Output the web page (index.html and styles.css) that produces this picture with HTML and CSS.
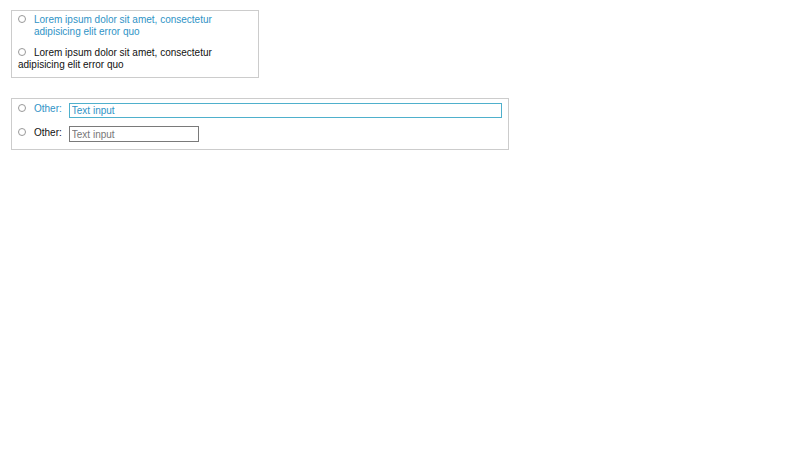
FILE: index.html
```html
<!DOCTYPE html>
<html>
<head>
<meta charset="utf-8">
<link rel="stylesheet" href="styles.css">
</head>
<body>
<div class="box box-list">
  <label class="item item-hang active"><input type="radio" name="a" class="radio"><span>Lorem ipsum dolor sit amet, consectetur adipisicing elit error quo</span></label>
  <label class="item item-wrap"><input type="radio" name="a" class="radio">Lorem ipsum dolor sit amet, consectetur adipisicing elit error quo</label>
</div>
<div class="box box-other">
  <div class="row active"><input type="radio" name="b" class="radio"><span class="other">Other:</span><input type="text" class="text text-wide" placeholder="Text input"></div>
  <div class="row"><input type="radio" name="b" class="radio"><span class="other">Other:</span><input type="text" class="text text-small" placeholder="Text input"></div>
</div>
</body>
</html>
```
FILE: styles.css
```css
html, body {
  margin: 0;
  background: #fff;
}
body {
  padding: 10px 0 0 11px;
  font-family: "Liberation Sans", Arial, sans-serif;
  font-size: 10px;
  line-height: 12px;
  color: #111;
}
.box {
  box-sizing: border-box;
  border: 1px solid #cccccc;
  background: #fff;
}
.box-list {
  width: 248px;
  height: 68px;
  padding: 3px 6px 0 6px;
}
.item {
  display: block;
}
.item-hang {
  display: flex;
  align-items: flex-start;
  margin-bottom: 9px;
}
.radio {
  -webkit-appearance: none;
  appearance: none;
  box-sizing: border-box;
  width: 8px;
  height: 8px;
  margin: 0 8px 0 0;
  border: 1px solid #999;
  border-radius: 50%;
  background: #fff;
  flex: none;
}
.item-hang .radio {
  margin-top: 1px;
}
.item-wrap .radio {
  vertical-align: 0;
}
.active {
  color: #2f93c6;
}
.box-other {
  width: 498px;
  height: 52px;
  margin-top: 20px;
  padding: 3px 6px 0 6px;
}
.row {
  display: flex;
  align-items: center;
  height: 16px;
}
.row + .row {
  margin-top: 8px;
}
.row .radio {
  margin-top: -4px;
}
.other {
  margin-right: 7px;
  position: relative;
  top: -1px;
}
.text {
  box-sizing: border-box;
  height: 15px;
  margin: 0;
  padding: 0 2px;
  font-family: "Liberation Sans", Arial, sans-serif;
  font-size: 10px;
  border: 1px solid #7a7a7a;
  border-radius: 0;
  outline: none;
  background: #fff;
}
.text-wide {
  flex: 1;
  border-color: #4fb0cc;
}
.text-wide::placeholder {
  color: #2f93c6;
  opacity: 1;
}
.text-small {
  width: 130px;
  height: 16px;
}
.text-small::placeholder {
  color: #777;
  opacity: 1;
}
```
